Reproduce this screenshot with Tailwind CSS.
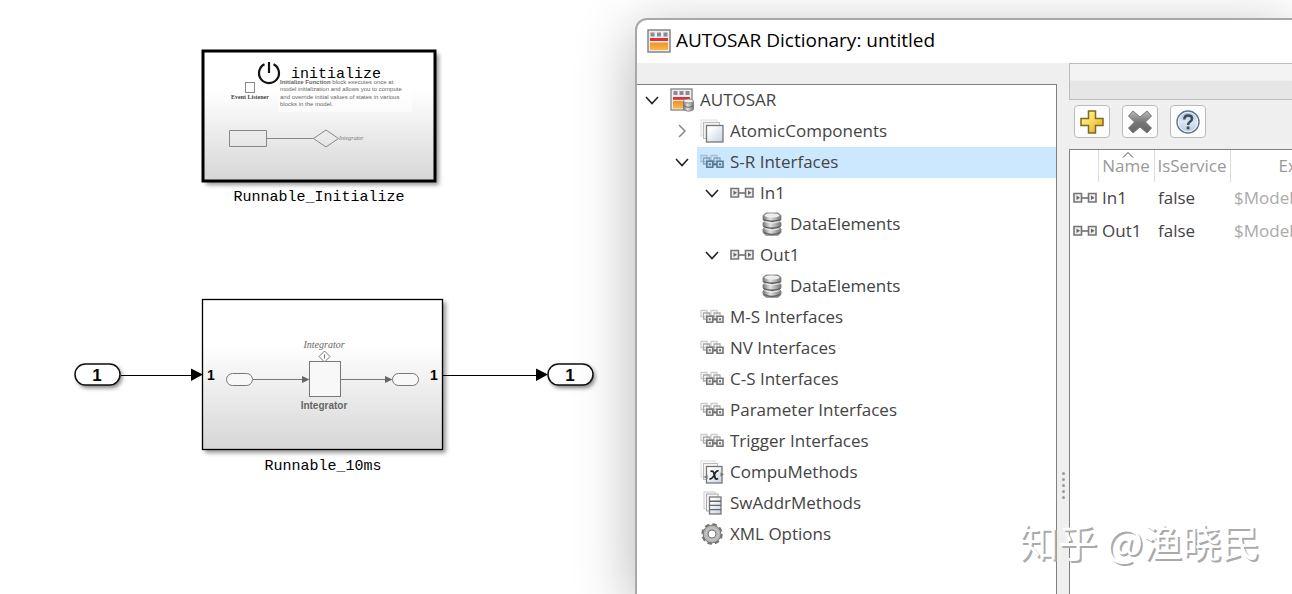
<!DOCTYPE html>
<html lang="en">
<head>
<meta charset="utf-8">
<meta name="viewport" content="width=device-width, initial-scale=1">
<title>AUTOSAR Dictionary: untitled</title>
<script src="https://cdn.jsdelivr.net/npm/@tailwindcss/browser@4"></script>
</head>
<body class="bg-white font-['Open_Sans',sans-serif] text-[#444]">

<!-- Shared icon definitions -->
<svg class="absolute size-0" aria-hidden="true">
  <defs>
    <linearGradient id="g-orange" x1="0" y1="0" x2="0" y2="1"><stop offset="0" stop-color="#f2921e"/><stop offset="1" stop-color="#f8b84c"/></linearGradient>
    <linearGradient id="g-sheet" x1="0" y1="0" x2="1" y2="1"><stop offset="0.2" stop-color="#fff"/><stop offset="1" stop-color="#c6d2e4"/></linearGradient>
    <linearGradient id="g-metal" x1="0" y1="0" x2="1" y2="0"><stop offset="0" stop-color="#777"/><stop offset=".4" stop-color="#e2e2e2"/><stop offset="1" stop-color="#777"/></linearGradient>
    <linearGradient id="g-gold" x1="0" y1="0" x2="1" y2="1"><stop offset="0" stop-color="#fff6b0"/><stop offset=".5" stop-color="#f7d95a"/><stop offset="1" stop-color="#dba520"/></linearGradient>
    <linearGradient id="g-gray" x1="0" y1="0" x2="0" y2="1"><stop offset="0" stop-color="#bbb"/><stop offset=".5" stop-color="#777"/><stop offset="1" stop-color="#666"/></linearGradient>
    <linearGradient id="g-help" x1="0" y1="0" x2="0" y2="1"><stop offset="0" stop-color="#a3b8cc"/><stop offset=".5" stop-color="#dce8f2"/><stop offset="1" stop-color="#b4cade"/></linearGradient>
    <linearGradient id="g-block" x1="0" y1="0" x2="0" y2="1"><stop offset=".3" stop-color="#fff"/><stop offset="1" stop-color="#d6d6d6"/></linearGradient>
  </defs>
  <symbol id="i-app" viewBox="0 0 24 24">
    <rect x="1" y="1" width="22" height="22" fill="#eceef0" stroke="#8a8380" stroke-width="1.5"/>
    <path d="M3.500 3.500h4v4h-4zM10 3.500h4v4h-4zM16.500 3.500h4v4h-4z" fill="#8b8c92"/>
    <rect x="3" y="9" width="18" height="3" fill="#d8323c"/>
    <rect x="3" y="13.500" width="18" height="7.500" fill="url(#g-orange)"/>
  </symbol>
  <symbol id="i-root" viewBox="0 0 24 24">
    <rect x="1" y="1" width="21" height="21" fill="#eceef0" stroke="#8a8380" stroke-width="1.300"/>
    <path d="M3.500 3h4v4h-4zM9.500 3h4v4h-4zM15.500 3h4v4h-4z" fill="#8b8c92"/>
    <rect x="3" y="9" width="17" height="2.800" fill="#d8323c"/>
    <rect x="3" y="13" width="17" height="7.500" fill="url(#g-orange)"/>
    <path d="M13.500 13v8.500q5 3.500 10 0V13z" fill="url(#g-metal)" stroke="#777" stroke-width=".8"/>
    <ellipse cx="18.500" cy="13" rx="5" ry="2" fill="#eee" stroke="#777" stroke-width=".8"/>
    <path d="M13.500 17.500q5 3.500 10 0" fill="none" stroke="#666"/>
  </symbol>
  <symbol id="i-sheets" viewBox="0 0 24 24">
    <rect x="1" y="1" width="16" height="16" fill="#f7f7f7" stroke="#ddd"/>
    <rect x="3.500" y="3.500" width="16" height="16" fill="#f2f2f2" stroke="#bbb"/>
    <rect x="6.500" y="6.500" width="16.500" height="16.500" fill="url(#g-sheet)" stroke="#777" stroke-width="1.300"/>
  </symbol>
  <symbol id="i-ifaces" viewBox="0 0 24 24">
    <g fill="none" stroke-width="1.300">
      <path d="M1 5.500h6v6H1zM11 5.500h6v6h-6zM7 8.500h4" stroke="#ccc"/>
      <path d="M3.500 8h6v6h-6zM14 8h6v6h-6zM9.500 11h4.500" stroke="#aaa"/>
    </g>
    <path d="M13 14.500h4" stroke="#666" stroke-width="1.800"/>
    <path d="M6.800 11.300h6v6h-6zM17 11.300h6v6h-6z" fill="#eee" stroke="#777" stroke-width="1.600"/>
    <path d="M8.800 13.300h2v2h-2zM19 13.300h2v2h-2z" fill="#777"/>
  </symbol>
  <symbol id="i-ifaces-on" viewBox="0 0 24 24">
    <g fill="none" stroke-width="1.300">
      <path d="M1 5.500h6v6H1zM11 5.500h6v6h-6zM7 8.500h4" stroke="#a3c0d8"/>
      <path d="M3.500 8h6v6h-6zM14 8h6v6h-6zM9.500 11h4.500" stroke="#82a3be"/>
    </g>
    <path d="M13 14.500h4" stroke="#4c6f8c" stroke-width="1.800"/>
    <path d="M6.800 11.300h6v6h-6zM17 11.300h6v6h-6z" fill="#bcdaf2" stroke="#587a96" stroke-width="1.600"/>
    <path d="M8.800 13.300h2v2h-2zM19 13.300h2v2h-2z" fill="#587a96"/>
  </symbol>
  <symbol id="i-iface" viewBox="0 0 24 24">
    <path d="M9 12h6" stroke="#666" stroke-width="1.500"/>
    <path d="M1 7.500h7.500v8.500H1zM15.500 7.500H23v8.500h-7.500z" fill="#eee" stroke="#757575" stroke-width="1.600"/>
    <path d="M3.500 9.500l3.500 2.300-3.500 2.300zM18 9.500l3.500 2.300-3.500 2.300z" fill="#666"/>
  </symbol>
  <symbol id="i-db" viewBox="0 0 24 24">
    <path d="M6 1h12l3 2.500v4l-1.500 1.700 1.500 1.700v3l-1.500 1.700 1.500 1.700v3.200L18 23.300H6l-3-2.800v-3.200l1.500-1.700L3 13.900v-3l1.500-1.700L3 7.500v-4z" fill="url(#g-metal)" stroke="#777" stroke-width=".8"/>
    <ellipse cx="12" cy="3.500" rx="7.500" ry="2" fill="#eee"/>
    <path d="M3.500 7.500q8.500 3.500 17 0M3.500 14.500q8.500 3.500 17 0" fill="none" stroke="#555" stroke-width="1.300"/>
    <path d="M4.500 9.700q7.500 3 15 0M4.500 16.700q7.500 3 15 0" fill="none" stroke="#eee"/>
    <path d="M4 20.500q8 4 16 0" fill="none" stroke="#666" stroke-width="1.500"/>
  </symbol>
  <symbol id="i-compu" viewBox="0 0 24 24">
    <rect x="1" y="1" width="14" height="16" fill="#fafafa" stroke="#ddd"/>
    <rect x="3.500" y="3.500" width="14" height="16" fill="#f5f5f5" stroke="#bbb"/>
    <rect x="6.500" y="6.500" width="15.500" height="16.500" fill="url(#g-sheet)" stroke="#777" stroke-width="1.300"/>
    <path d="M3.500 17l4-2v4zM20.500 12.500l3.500 2-3.500 2z" fill="#777"/>
    <path d="M10.500 11.500q2.500-1.500 3.500 2l1 4q.5 2.500 3 1M18.500 11q-2-1-4 3.500t-5 4.500" fill="none" stroke="#222" stroke-width="1.800"/>
  </symbol>
  <symbol id="i-addr" viewBox="0 0 24 24">
    <rect x="4" y="1" width="11" height="17" fill="#fafafa" stroke="#ccc"/>
    <rect x="6.500" y="3" width="11.500" height="17" fill="#f5f5f5" stroke="#aaa"/>
    <rect x="9.500" y="6" width="11.500" height="17" fill="url(#g-sheet)" stroke="#777" stroke-width="1.300"/>
    <path d="M9.500 10.200H21M9.500 14.400H21M9.500 18.600H21" stroke="#666" stroke-width="1.400"/>
  </symbol>
  <symbol id="i-gear" viewBox="0 0 24 24">
    <circle cx="12" cy="12" r="9.500" fill="none" stroke="#777" stroke-width="2.500" stroke-dasharray="4.500 2.960"/>
    <circle cx="12" cy="12" r="6.500" fill="none" stroke="#b4b4b4" stroke-width="5"/>
    <circle cx="12" cy="12" r="8.900" fill="none" stroke="#777"/>
    <circle cx="12" cy="12" r="6.200" fill="none" stroke="#ccc"/>
    <circle cx="12" cy="12" r="4" fill="#fff" stroke="#777"/>
  </symbol>
  <symbol id="i-open" viewBox="0 0 24 24"><path d="M6 9l6 6.500L18 9" fill="none" stroke="#222" stroke-width="1.600"/></symbol>
  <symbol id="i-closed" viewBox="0 0 24 24"><path d="M9 6l6 6-6 6" fill="none" stroke="#888" stroke-width="1.500"/></symbol>
  <symbol id="i-add" viewBox="0 0 24 24"><path d="M8.500 1h7v7.500H23v7h-7.500V23h-7v-7.500H1v-7h7.500z" fill="url(#g-gold)" stroke="#84681c" stroke-width="1.500"/></symbol>
  <symbol id="i-del" viewBox="0 0 24 24"><path d="M5 1l7 6 7-6 4.500 5-6 6 6 6-4.500 5-7-6-7 6-4.500-5 6-6-6-6z" fill="url(#g-gray)" stroke="#777"/></symbol>
  <symbol id="i-help" viewBox="0 0 24 24">
    <circle cx="12" cy="12" r="11" fill="url(#g-help)" stroke="#60758b" stroke-width="1.400"/>
    <circle cx="12" cy="12" r="9.700" fill="none" stroke="#edf4fa"/>
    <path d="M8.300 9.500q0-4 4-4 3.700 0 3.700 3.200 0 1.800-2 3t-1.900 3.300" fill="none" stroke="#3c4b5c" stroke-width="2.500"/>
    <rect x="10.700" y="16.500" width="2.800" height="2.800" fill="#3c4b5c"/>
  </symbol>
</svg>

<div class="relative flex h-screen overflow-hidden">

  <!-- Model canvas -->
  <main class="w-[635px] shrink-0">
    <svg class="block" width="635" height="594" viewBox="0 0 635 594" role="img" aria-label="Simulink model">
      <!-- Runnable_Initialize -->
      <rect x="206" y="54" width="233" height="131" class="fill-black/40 blur-[2px]"/>
      <rect x="203" y="51" width="232" height="130" fill="url(#g-block)" stroke="#000" stroke-width="3"/>
      <rect x="278" y="80" width="134" height="32" fill="#fff" fill-opacity=".6"/>
      <g class="fill-[#666] font-['Liberation_Sans'] text-[6px]">
        <text x="280" y="84"><tspan class="font-bold">Initialize Function</tspan> block executes once at</text>
        <text x="280" y="91">model initialization and allows you to compute</text>
        <text x="280" y="99">and override initial values of states in various</text>
        <text x="280" y="106">blocks in the model.</text>
      </g>
      <g fill="none" stroke="#888">
        <rect x="245.500" y="82.500" width="9" height="10"/>
        <path d="M229.500 130.500h37v16h-37zM266.500 138.500h47M313.500 138.500l12.500-8.500 12.500 8.500-12.500 8.500z"/>
      </g>
      <text x="250" y="99" text-anchor="middle" class="fill-[#444] font-['Liberation_Serif'] text-[6px] font-bold">Event Listener</text>
      <text x="339" y="140" class="fill-[#777] font-['Liberation_Serif'] text-[6px] italic">Integrator</text>
      <path d="M264.500 64.200a10 10 0 1 0 9 0M269 62v11" fill="none" stroke="#111" stroke-width="2.200"/>
      <text x="291" y="78" class="fill-black font-['Liberation_Mono'] text-[15px]">initialize</text>
      <text x="319" y="201" text-anchor="middle" class="fill-black font-['Liberation_Mono'] text-[15px]">Runnable_Initialize</text>

      <!-- Runnable_10ms -->
      <rect x="205" y="302" width="241" height="151" class="fill-black/40 blur-[2px]"/>
      <rect x="202.500" y="299.500" width="240" height="150" fill="url(#g-block)" stroke="#000" stroke-width="1.300"/>
      <text x="323" y="470" text-anchor="middle" class="fill-black font-['Liberation_Mono'] text-[15px]">Runnable_10ms</text>
      <g fill="none" stroke="#777">
        <rect x="226.500" y="373.500" width="26" height="12" rx="6" fill="#f8f8f8"/>
        <rect x="392.500" y="373.500" width="26" height="12" rx="6" fill="#f8f8f8"/>
        <rect x="309.500" y="361.500" width="31" height="35" fill="#f8f8f8"/>
        <path d="M324.500 351l5.500 5.500-5.500 5.500-5.500-5.500z" fill="#fff"/>
        <path d="M324.500 354.500v4M253 379.500h50M341 379.500h45"/>
      </g>
      <path d="M302 376l7.500 3.500-7.500 3.500zM385 376l7.500 3.500-7.500 3.500z" fill="#666"/>
      <text x="324" y="348" text-anchor="middle" class="fill-[#666] font-['Liberation_Serif'] text-[10px] italic">Integrator</text>
      <text x="324" y="409" text-anchor="middle" class="fill-[#666] font-['Liberation_Sans'] text-[10px] font-bold">Integrator</text>

      <!-- Ports and signals -->
      <rect x="77" y="366" width="45" height="22" rx="11" class="fill-black/50 blur-[2px]"/>
      <rect x="550" y="366" width="45" height="22" rx="11" class="fill-black/50 blur-[2px]"/>
      <g fill="#fff" stroke="#111" stroke-width="1.500">
        <rect x="75" y="364" width="45" height="21" rx="10.500"/>
        <rect x="548" y="364" width="45" height="21" rx="10.500"/>
      </g>
      <path d="M121 375.500h72M443 375.500h95" stroke="#000"/>
      <path d="M191 368.500l12 6-12 6.500zM536 368.500l12 6-12 6.500z"/>
      <g text-anchor="middle" class="fill-black font-['Liberation_Sans'] font-bold">
        <text x="97" y="381" class="text-[17px]">1</text>
        <text x="570" y="381" class="text-[17px]">1</text>
        <text x="211" y="380" class="text-[14px]">1</text>
        <text x="434" y="380" class="text-[14px]">1</text>
      </g>
    </svg>
  </main>

  <!-- Dictionary window -->
  <section class="relative mt-[18px] flex min-w-0 flex-1 flex-col rounded-tl-xl border-t-2 border-l-2 border-[#a8a8a8] bg-white shadow-[0_14px_60px_rgb(0_0_0/.3)]">
    <header class="mb-0.5 flex h-[41px] shrink-0 items-center gap-[5px] pl-[10px]">
      <svg class="size-6"><use href="#i-app"/></svg>
      <h1 class="text-[19px] text-black">AUTOSAR Dictionary: untitled</h1>
    </header>

    <div class="flex min-h-0 flex-1 bg-[#efefef]">
      <div class="flex w-[420px] shrink-0 flex-col">
        <div class="h-[21px] shrink-0"></div>
        <nav class="flex-1 border-t border-r border-[#808080] bg-white text-[17px]" aria-label="Dictionary tree">
          <ul>
            <li>
              <div class="flex h-[31px] items-center pl-[3px]">
                <button aria-label="Collapse AUTOSAR" class="mb-0.5 size-6"><svg class="size-6"><use href="#i-open"/></svg></button>
                <span class="ml-[3px] flex h-full flex-1 items-center gap-1.5 pb-0.5 pl-[3px]"><svg class="size-6"><use href="#i-root"/></svg>AUTOSAR</span>
              </div>
              <ul class="pl-[30px]">
                <li class="flex h-[31px] items-center pl-[3px]">
                  <button aria-label="Expand AtomicComponents" class="mb-0.5 size-6"><svg class="size-6"><use href="#i-closed"/></svg></button>
                  <span class="ml-[3px] flex h-full flex-1 items-center gap-1.5 pb-0.5 pl-[3px]"><svg class="size-6"><use href="#i-sheets"/></svg>AtomicComponents</span>
                </li>
                <li>
                  <div class="flex h-[31px] items-center pl-[3px]">
                    <button aria-label="Collapse S-R Interfaces" class="mb-0.5 size-6"><svg class="size-6"><use href="#i-open"/></svg></button>
                    <span class="ml-[3px] flex h-full flex-1 items-center gap-1.5 bg-[#cce8ff] pb-0.5 pl-[3px]"><svg class="size-6"><use href="#i-ifaces-on"/></svg>S-R Interfaces</span>
                  </div>
                  <ul class="pl-[30px]">
                    <li>
                      <div class="flex h-[31px] items-center pl-[3px]">
                        <button aria-label="Collapse In1" class="mb-0.5 size-6"><svg class="size-6"><use href="#i-open"/></svg></button>
                        <span class="ml-[3px] flex h-full flex-1 items-center gap-1.5 pb-0.5 pl-[3px]"><svg class="size-6"><use href="#i-iface"/></svg>In1</span>
                      </div>
                      <ul class="pl-[30px]"><li class="flex h-[31px] items-center gap-1.5 pb-0.5 pl-[33px]"><svg class="size-6"><use href="#i-db"/></svg>DataElements</li></ul>
                    </li>
                    <li>
                      <div class="flex h-[31px] items-center pl-[3px]">
                        <button aria-label="Collapse Out1" class="mb-0.5 size-6"><svg class="size-6"><use href="#i-open"/></svg></button>
                        <span class="ml-[3px] flex h-full flex-1 items-center gap-1.5 pb-0.5 pl-[3px]"><svg class="size-6"><use href="#i-iface"/></svg>Out1</span>
                      </div>
                      <ul class="pl-[30px]"><li class="flex h-[31px] items-center gap-1.5 pb-0.5 pl-[33px]"><svg class="size-6"><use href="#i-db"/></svg>DataElements</li></ul>
                    </li>
                  </ul>
                </li>
                <li class="flex h-[31px] items-center gap-1.5 pb-0.5 pl-[33px]"><svg class="size-6"><use href="#i-ifaces"/></svg>M-S Interfaces</li>
                <li class="flex h-[31px] items-center gap-1.5 pb-0.5 pl-[33px]"><svg class="size-6"><use href="#i-ifaces"/></svg>NV Interfaces</li>
                <li class="flex h-[31px] items-center gap-1.5 pb-0.5 pl-[33px]"><svg class="size-6"><use href="#i-ifaces"/></svg>C-S Interfaces</li>
                <li class="flex h-[31px] items-center gap-1.5 pb-0.5 pl-[33px]"><svg class="size-6"><use href="#i-ifaces"/></svg>Parameter Interfaces</li>
                <li class="flex h-[31px] items-center gap-1.5 pb-0.5 pl-[33px]"><svg class="size-6"><use href="#i-ifaces"/></svg>Trigger Interfaces</li>
                <li class="flex h-[31px] items-center gap-1.5 pb-0.5 pl-[33px]"><svg class="size-6"><use href="#i-compu"/></svg>CompuMethods</li>
                <li class="flex h-[31px] items-center gap-1.5 pb-0.5 pl-[33px]"><svg class="size-6"><use href="#i-addr"/></svg>SwAddrMethods</li>
                <li class="flex h-[31px] items-center gap-1.5 pb-0.5 pl-[33px]"><svg class="size-6"><use href="#i-gear"/></svg>XML Options</li>
              </ul>
            </li>
          </ul>
        </nav>
      </div>

      <!-- Splitter -->
      <div class="flex w-3 shrink-0 flex-col items-center gap-[3px] pt-[409px]">
        <i class="size-[3px] shrink-0 rounded-full bg-[#999]"></i><i class="size-[3px] shrink-0 rounded-full bg-[#999]"></i><i class="size-[3px] shrink-0 rounded-full bg-[#999]"></i><i class="size-[3px] shrink-0 rounded-full bg-[#999]"></i><i class="size-[3px] shrink-0 rounded-full bg-[#999]"></i>
      </div>

      <div class="flex min-w-0 flex-1 flex-col">
        <div class="h-[37px] shrink-0 border-y border-l border-[#bdbdbd] bg-linear-to-b from-[#f3f3f3] from-45% to-[#e6e6e6] to-50%"></div>
        <div class="flex h-[49px] shrink-0 gap-3 pt-[5px] pl-[5px]">
          <button aria-label="Add" class="flex h-[33px] w-9 items-center justify-center rounded-sm border border-[#bbb] bg-[#fdfdfd]"><svg class="size-6"><use href="#i-add"/></svg></button>
          <button aria-label="Delete" class="flex h-[33px] w-9 items-center justify-center rounded-sm border border-[#bbb] bg-[#fdfdfd]"><svg class="size-6"><use href="#i-del"/></svg></button>
          <button aria-label="Help" class="flex h-[33px] w-9 items-center justify-center rounded-sm border border-[#bbb] bg-[#fdfdfd]"><svg class="size-6"><use href="#i-help"/></svg></button>
        </div>
        <div class="flex-1 overflow-hidden border-t border-l border-[#808080] bg-white text-[17px]">
          <table class="w-[340px] table-fixed border-collapse text-left">
            <colgroup><col class="w-7"><col class="w-14"><col class="w-[76px]"><col></colgroup>
            <thead>
              <tr class="h-8 text-[#999]">
                <th class="border-r border-[#ddd] p-0"></th>
                <th class="relative border-r border-[#ddd] p-0 text-center font-normal">
                  <svg class="absolute top-px left-[23px] h-2 w-3" viewBox="0 0 12 8"><path d="M1 6.500l5-5 5 5" fill="none" stroke="#444"/></svg>Name</th>
                <th class="border-r border-[#ddd] p-0 text-center font-normal">IsService</th>
                <th class="p-0 pl-12 font-normal">Ex</th>
              </tr>
            </thead>
            <tbody>
              <tr class="h-[33px]"><td class="p-0 pb-0.5 pl-[3px]"><svg class="size-6"><use href="#i-iface"/></svg></td><td class="p-0 pb-0.5 pl-1">In1</td><td class="p-0 pb-0.5 pl-1">false</td><td class="p-0 pb-0.5 pl-1 text-[#aaa]">$Model</td></tr>
              <tr class="h-[33px]"><td class="p-0 pb-0.5 pl-[3px]"><svg class="size-6"><use href="#i-iface"/></svg></td><td class="p-0 pb-0.5 pl-1">Out1</td><td class="p-0 pb-0.5 pl-1">false</td><td class="p-0 pb-0.5 pl-1 text-[#aaa]">$Model</td></tr>
            </tbody>
          </table>
        </div>
      </div>
    </div>
  </section>

  <p class="absolute right-8 bottom-[25px] font-['Noto_Sans_CJK_SC',sans-serif] text-[39px] whitespace-nowrap text-white [text-shadow:2px_2px_0_#aaa]">知乎 @渔晓民</p>
</div>
</body>
</html>
